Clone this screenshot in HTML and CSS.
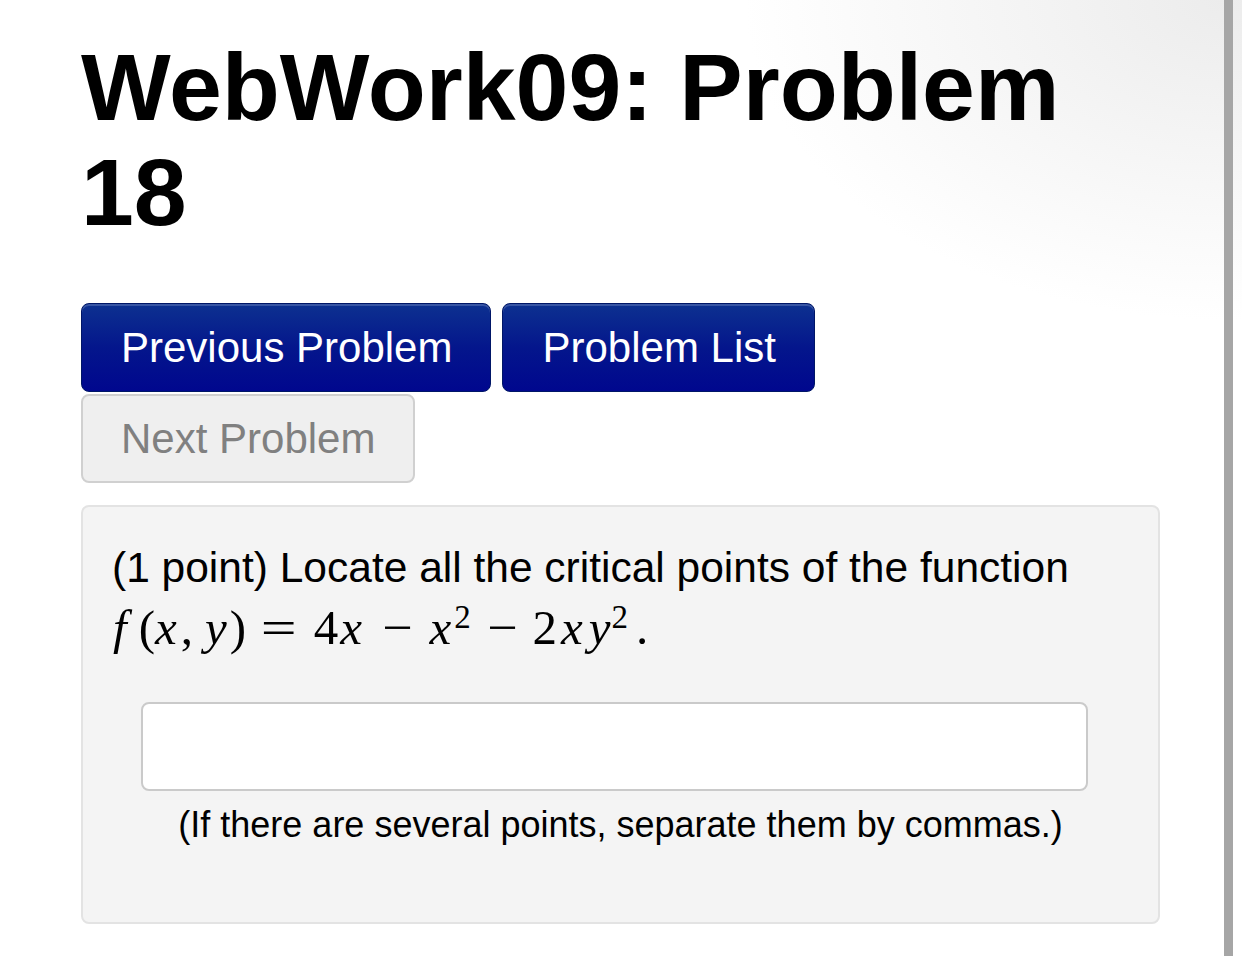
FILE: index.html
```html
<!DOCTYPE html>
<html lang="en">
<head>
<meta charset="utf-8">
<title>WebWork09: Problem 18</title>
<link rel="stylesheet" href="styles.css">
</head>
<body>
<div class="page">
  <h1 class="title">WebWork09: Problem 18</h1>
  <div class="nav">
    <div class="nav-row">
      <a class="btn btn-primary">Previous Problem</a>
      <a class="btn btn-primary">Problem List</a>
    </div>
    <div class="nav-row">
      <span class="btn btn-disabled">Next Problem</span>
    </div>
  </div>
  <div class="problem">
    <p class="statement">(1 point) Locate all the critical points of the function <span class="math"><i class="mi f">f</i><span class="mp">(</span><i class="mi x1">x</i><span class="comma">,</span><i class="mi y1">y</i><span class="mp close">)</span><span class="op rel">=</span><span class="mn n4">4</span><i class="mi x2">x</i><span class="op bin b1">−</span><i class="mi x3">x</i><sup class="s1">2</sup><span class="op bin b2">−</span><span class="mn n2">2</span><i class="mi x4">x</i><i class="mi y2">y</i><sup class="s2">2</sup><span class="dot">.</span></span></p>
    <div class="answer"><input class="answer-input" type="text"></div>
    <p class="hint">(If there are several points, separate them by commas.)</p>
  </div>
</div>
</body>
</html>
```
FILE: styles.css
```css
html {
  background:
    linear-gradient(to right, transparent 1224px, #a6a6a6 1224px, #a6a6a6 1233px, transparent 1233px),
    radial-gradient(ellipse 480px 320px at 1225px 0, #ececec, #ffffff);
  background-color: #fff;
  min-height: 100%;
}
body {
  margin: 0;
  font-family: "Liberation Sans", Arial, sans-serif;
  color: #000;
}
.page {
  width: 1079px;
  padding-left: 81px;
}
.title {
  margin: 0;
  padding-top: 35px;
  font-size: 95px;
  line-height: 105px;
  font-weight: bold;
}
.nav {
  margin-top: 58px;
  display: flex;
  flex-direction: column;
  gap: 2px;
}
.nav-row {
  display: flex;
  gap: 11px;
}
.btn {
  box-sizing: border-box;
  height: 89px;
  padding: 0 38px 0 39px;
  display: flex;
  align-items: center;
  font-size: 42px;
  line-height: 1;
  border-radius: 8px;
}
.btn-primary {
  color: #fff;
  background: linear-gradient(to bottom, #0d3190 0%, #04168c 50%, #00078e 100%);
  border: 1px solid #001667;
  box-shadow: inset 0 2px 0 rgba(255, 255, 255, 0.18);
}
.btn-disabled {
  padding: 0 38px;
  color: #808080;
  background: #efefef;
  border: 2px solid #d0d0d0;
}
.problem {
  box-sizing: border-box;
  margin-top: 22px;
  height: 419px;
  background: #f4f4f4;
  border: 2px solid #e3e3e3;
  border-radius: 8px;
  padding: 31px 20px 0 29px;
}
.statement {
  margin: 0;
  font-size: 42.5px;
  line-height: 60px;
}
.math {
  white-space: nowrap;
  font-family: "Liberation Serif", "Times New Roman", serif;
  font-size: 49px;
}
.math .op {
  display: inline-block;
}
.math .rel {
  transform: scaleX(1.3);
  margin: 0 21px 0 19px;
}
.math .bin {
  transform: scaleX(1.1);
}
.math .f { margin-left: 1px; margin-right: 12px; }
.math .x1 { margin-right: 4px; }
.math .comma { margin-right: 12px; }
.math .y1 { margin-right: 3px; }
.math .n4 { margin-right: 2px; }
.math .x2 { margin-right: 22px; }
.math .b1 { margin-right: 18px; }
.math .x3 { margin-right: 3px; }
.math .s1 { margin-right: 18px; }
.math .b2 { margin-right: 16px; }
.math .n2 { margin-right: 4px; }
.math .x4 { margin-right: 6px; }
.math .y2 { margin-right: 1px; }
.math .dot { margin-left: 8px; }
.math sup {
  font-size: 33px;
  line-height: 0;
  vertical-align: 0.5em;
}
.answer {
  margin-top: 42px;
  padding-left: 29px;
}
.answer-input {
  box-sizing: border-box;
  display: block;
  width: 947px;
  height: 89px;
  margin: 0;
  border: 2px solid #cacaca;
  border-radius: 8px;
  background: #fff;
  font-size: 36px;
}
.hint {
  margin: 12px 0 0 -9px;
  text-align: center;
  font-size: 36px;
  line-height: 44px;
}
```
